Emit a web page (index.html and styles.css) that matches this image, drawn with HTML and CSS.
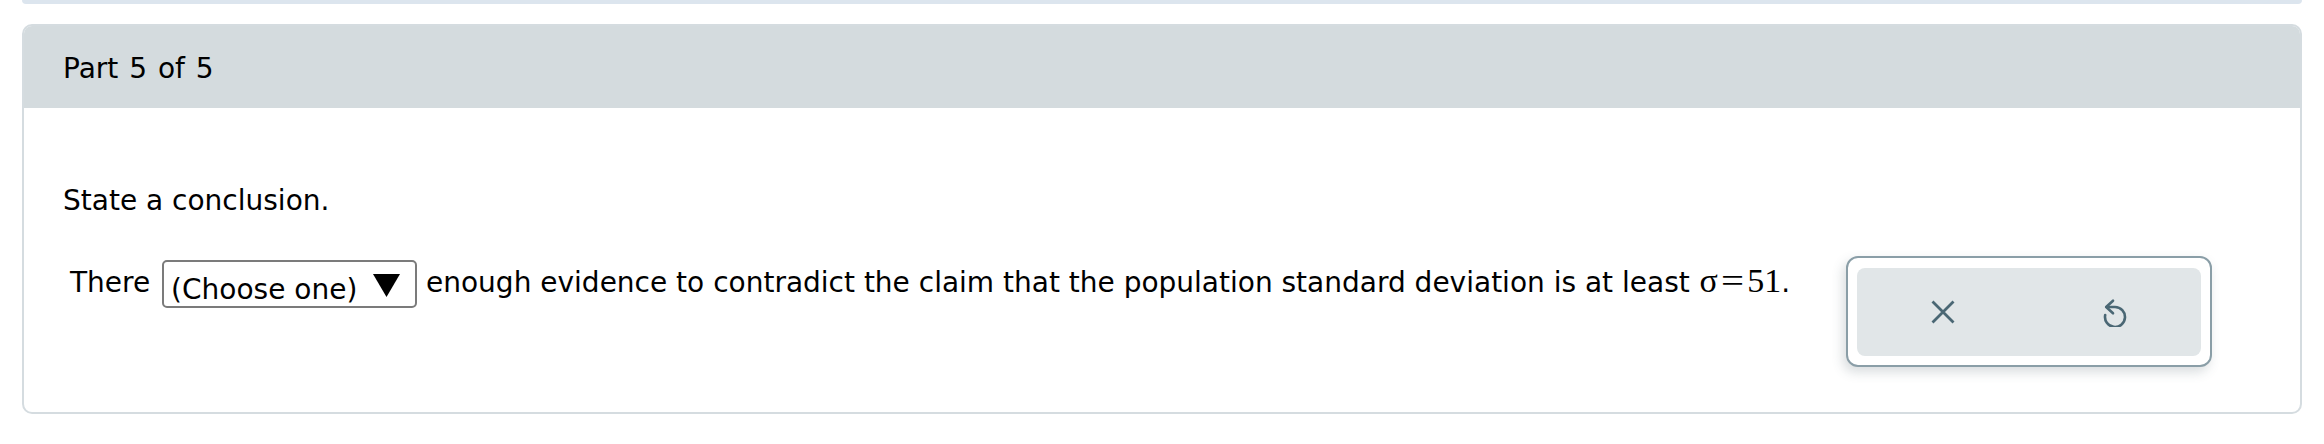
FILE: index.html
```html
<!DOCTYPE html>
<html lang="en">
<head>
<meta charset="utf-8">
<title>Part 5 of 5</title>
<link rel="stylesheet" href="styles.css">
</head>
<body>
<div class="page">
  <div class="topbar"></div>
  <section class="card">
    <header class="card-head">Part 5 of 5</header>
    <div class="card-body">
      <p class="prompt">State a conclusion.</p>
      <div class="answer-row">
        <div class="sentence">There <span class="select"><span class="select-label">(Choose one)</span><svg class="select-arrow" viewBox="0 0 27 23" width="27" height="23"><polygon points="0,0 27,0 13.5,23" fill="#000"/></svg></span> enough evidence to contradict the claim that the population standard deviation is at least <span class="math"><span class="mi">σ</span><span class="mo">=</span><span class="mn">51</span></span>.</div>
        <div class="tools">
          <div class="tools-inner">
            <button class="tool-btn" type="button" aria-label="Clear">
              <svg width="24" height="24" viewBox="0 0 24 24"><path d="M1.5 1.5 L22.5 22.5 M22.5 1.5 L1.5 22.5" stroke="#4a6774" stroke-width="2.8" fill="none"/></svg>
            </button>
            <button class="tool-btn" type="button" aria-label="Undo">
              <svg width="28" height="30" viewBox="0 -2 28 30"><path d="M5.5 8 H14 A10 10 0 1 1 4.2 16" stroke="#4a6774" stroke-width="2.6" fill="none" stroke-linecap="round"/><path d="M12 1.7 L5.2 8 L12 14.3" stroke="#4a6774" stroke-width="2.6" fill="none" stroke-linecap="round" stroke-linejoin="round"/></svg>
            </button>
          </div>
        </div>
      </div>
    </div>
  </section>
</div>
</body>
</html>
```

FILE: styles.css
```css
body {
  margin: 0;
  background: #ffffff;
  font-family: "DejaVu Sans", Verdana, sans-serif;
  font-size: 28px;
  color: #000000;
}

.page {
  padding: 0 22px;
}

.topbar {
  height: 4px;
  background: #dce5ee;
  border-radius: 0 0 8px 8px;
}

.card {
  margin-top: 20px;
  border: 2px solid #d5dce0;
  border-radius: 10px;
  overflow: hidden;
}

.card-head {
  background: #d4dbde;
  padding: 26px 39px 22px;
  line-height: 34px;
  word-spacing: 2px;
}

.card-body {
  padding: 76px 88px 45px 39px;
}

.prompt {
  margin: 0;
  line-height: 34px;
}

.answer-row {
  display: flex;
  align-items: flex-start;
  margin-top: 38px;
}

.sentence {
  flex: 1;
  margin-top: 4px;
  padding-left: 7px;
  line-height: 34px;
  white-space: nowrap;
}

.select {
  display: inline-flex;
  align-items: flex-start;
  justify-content: space-between;
  width: 255px;
  height: 48px;
  box-sizing: border-box;
  border: 2px solid #7b7b7b;
  border-radius: 5px;
  padding: 11px 15px 0 7px;
  margin-left: 3px;
  vertical-align: -7px;
  line-height: 34px;
}

.select-arrow {
  margin-top: 1px;
}

.math {
  font-family: "Liberation Serif", "Times New Roman", serif;
  font-size: 34px;
  line-height: 34px;
}

.mi {
  margin-left: 1px;
}

.mo {
  display: inline-block;
  margin: 0 5px 0 5px;
  transform: scaleX(1.2);
}

.tools {
  flex: none;
  width: 366px;
  height: 111px;
  box-sizing: border-box;
  border: 2px solid #8a9ea7;
  border-radius: 12px;
  padding: 10px 9px 9px;
  background: #ffffff;
  box-shadow: -3px 5px 12px rgba(60, 80, 90, 0.2);
}

.tools-inner {
  display: flex;
  height: 100%;
  background: #e1e6e8;
  border-radius: 8px;
}

.tool-btn {
  flex: 1;
  display: flex;
  align-items: center;
  justify-content: center;
  border: 0;
  padding: 0;
  background: transparent;
}
```
